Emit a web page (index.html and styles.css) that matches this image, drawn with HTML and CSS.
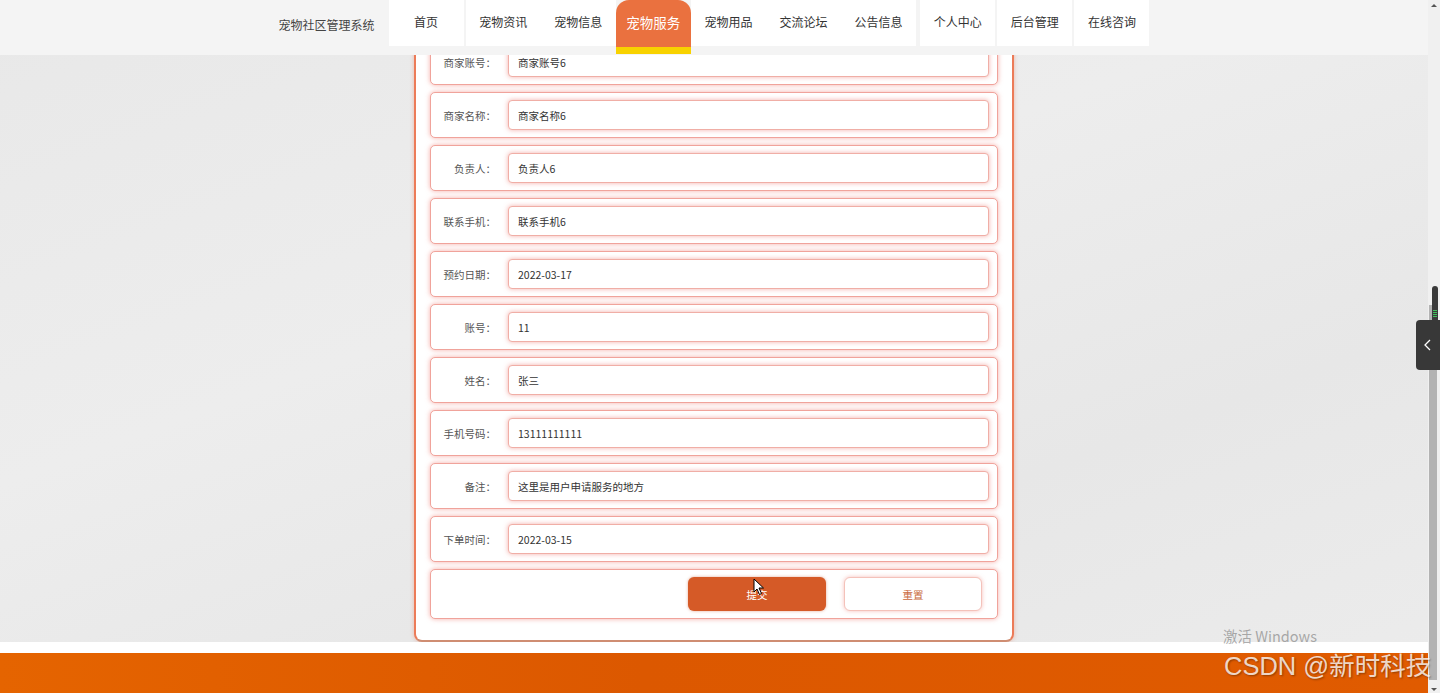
FILE: index.html
```html
<!DOCTYPE html>
<html lang="zh">
<head>
    <meta charset="UTF-8">
    <meta name="viewport" content="width=device-width, initial-scale=1.0">
    <title>宠物服务</title>
    <link rel="stylesheet" href="styles.css">
</head>
<body>

<div class="page">
    <header class="topbar">
        <div class="topbar-inner">
            <div class="brand">宠物社区管理系统</div>
            <nav class="nav">
                <a href="#" class="nav-item sep">首页</a>
                <a href="#" class="nav-item">宠物资讯</a>
                <a href="#" class="nav-item">宠物信息</a>
                <a href="#" class="nav-item active">宠物服务</a>
                <a href="#" class="nav-item">宠物用品</a>
                <a href="#" class="nav-item">交流论坛</a>
                <a href="#" class="nav-item sep-wide">公告信息</a>
                <a href="#" class="nav-item sep">个人中心</a>
                <a href="#" class="nav-item sep">后台管理</a>
                <a href="#" class="nav-item">在线咨询</a>
            </nav>
        </div>
    </header>

    <main class="content">
        <form class="card" onsubmit="return false">
            <div class="row"><label>商家账号：</label><input type="text" value="商家账号6"></div>
            <div class="row"><label>商家名称：</label><input type="text" value="商家名称6"></div>
            <div class="row"><label>负责人：</label><input type="text" value="负责人6"></div>
            <div class="row"><label>联系手机：</label><input type="text" value="联系手机6"></div>
            <div class="row"><label>预约日期：</label><input type="text" value="2022-03-17"></div>
            <div class="row"><label>账号：</label><input type="text" value="11"></div>
            <div class="row"><label>姓名：</label><input type="text" value="张三"></div>
            <div class="row"><label>手机号码：</label><input type="text" value="13111111111"></div>
            <div class="row"><label>备注：</label><input type="text" value="这里是用户申请服务的地方"></div>
            <div class="row"><label>下单时间：</label><input type="text" value="2022-03-15"></div>
            <div class="row actions">
                <button type="submit" class="btn btn-submit">提交</button>
                <button type="reset" class="btn btn-reset">重置</button>
            </div>
        </form>
    </main>

    <footer class="footer"></footer>

    <svg class="cursor" width="12" height="18" viewBox="0 0 12 18">
        <path d="M1 1 L1 14 L4 11 L6.5 16.5 L8.5 15.5 L6 10 L10.5 10 Z" fill="#fff" stroke="#000" stroke-width="1"/>
    </svg>

    <div class="watermark">激活 Windows</div>
    <div class="csdn">CSDN @新时科技</div>
</div>

<div class="scrollbar">
    <span class="arrow up"></span>
    <div class="thumb"></div>
    <span class="arrow down"></span>
</div>

<div class="side-pill"><i></i><i></i><i></i><i></i></div>
<div class="side-tab">
    <svg width="10" height="14" viewBox="0 0 10 14"><path d="M7 2 L2 7 L7 12" fill="none" stroke="#fff" stroke-width="1.3"/></svg>
</div>

</body>
</html>
```

FILE: styles.css
```css
html, body {
    margin: 0;
    height: 693px;
    overflow: hidden;
}
body {
    display: flex;
    font-family: "Noto Sans CJK SC", "Noto Sans", sans-serif;
    background: #ebebeb;
}
.page {
    flex: 1;
    position: relative;
    display: flex;
    flex-direction: column;
    background: linear-gradient(160deg, #e8e8e8, #ededed 40%, #e7e7e7 70%, #ececec);
}

/* header */
.topbar {
    position: absolute;
    top: 0;
    left: 0;
    right: 0;
    height: 55px;
    background: #f4f4f4;
    z-index: 5;
}
.topbar-inner {
    width: 871px;
    margin: 0 auto;
    display: flex;
}
.brand {
    width: 110px;
    font-size: 12px;
    color: #444;
    line-height: 50px;
}
.nav {
    width: 761px;
    display: flex;
    align-items: flex-start;
}
.nav-item {
    flex: 1;
    height: 46px;
    line-height: 44px;
    background: #fff;
    text-align: center;
    font-size: 12px;
    color: #333;
    text-decoration: none;
}
.nav-item.sep {
    margin-right: 2px;
}
.nav-item.sep-wide {
    margin-right: 4px;
}
.nav-item.active {
    height: 47px;
    background: #ea713f;
    color: #fff;
    font-size: 13.5px;
    border-radius: 13px 13px 0 0;
    border-bottom: 7px solid #f8d200;
}

/* form card */
.content {
    flex: 1;
}
.card {
    box-sizing: border-box;
    width: 600px;
    height: 642px;
    margin: 0 auto;
    padding: 37px 14px 21px;
    background: #fff;
    border: 2px solid #ec7b58;
    border-bottom-color: #cf8d72;
    border-radius: 0 0 8px 8px;
    box-shadow: 0 0 4px rgba(236, 120, 90, 0.45);
}
.row {
    box-sizing: border-box;
    height: 46px;
    margin-bottom: 7px;
    display: flex;
    align-items: center;
    background: #fff;
    border: 1px solid #f0a39b;
    border-radius: 5px;
    box-shadow: 0 0 5px rgba(240, 120, 110, 0.6);
}
.row label {
    width: 65px;
    text-align: right;
    font-size: 10.5px;
    color: #555;
}
.row input {
    box-sizing: border-box;
    width: 481px;
    height: 30px;
    margin-left: 12px;
    padding: 0 9px;
    border: 1px solid #f0aea6;
    border-radius: 4px;
    box-shadow: 0 0 5px rgba(235, 110, 100, 0.55);
    font-family: inherit;
    font-size: 10.5px;
    color: #333;
    outline: none;
}
.row.actions {
    height: 50px;
    margin-bottom: 0;
    justify-content: flex-end;
    gap: 18px;
    padding-right: 15px;
}
.btn {
    width: 138px;
    height: 34px;
    border-radius: 6px;
    font-family: inherit;
    font-size: 10.5px;
    cursor: pointer;
}
.btn-submit {
    background: #d55a27;
    color: #fff;
    border: none;
    box-shadow: 0 0 3px rgba(200, 80, 40, 0.5);
}
.btn-reset {
    background: #fff;
    color: #c96a3c;
    border: 1px solid #f4c2ba;
    box-shadow: 0 0 4px rgba(240, 130, 120, 0.5);
}

/* footer */
.footer {
    height: 40px;
    border-top: 11px solid #fff;
    background: linear-gradient(90deg, #e56400, #dc5800 45%, #e05b00);
}

/* overlays */
.cursor {
    position: absolute;
    left: 753px;
    top: 578px;
}
.watermark {
    position: absolute;
    left: 1223px;
    top: 625px;
    font-size: 14.5px;
    color: rgba(120, 120, 120, 0.6);
}
.csdn {
    position: absolute;
    left: 1224px;
    top: 645px;
    font-family: "Liberation Sans", "Noto Sans CJK SC", sans-serif;
    font-size: 25.5px;
    color: rgba(255, 255, 255, 0.78);
    text-shadow: 1px 1px 2px rgba(0, 0, 0, 0.35);
    white-space: nowrap;
}

/* fake browser scrollbar */
.scrollbar {
    width: 12px;
    background: #f0f0f0;
    display: flex;
    flex-direction: column;
    align-items: center;
}
.arrow {
    width: 0;
    height: 0;
    border-left: 3px solid transparent;
    border-right: 3px solid transparent;
}
.arrow.up {
    margin-top: 4px;
    border-bottom: 3px solid #555;
}
.arrow.down {
    margin-top: 8px;
    border-top: 3px solid #555;
}
.thumb {
    width: 8px;
    height: 375px;
    margin-top: 298px;
    margin-left: -2px;
    background: #b3b3b3;
}
.side-pill {
    position: fixed;
    right: 2px;
    top: 286px;
    width: 6px;
    height: 42px;
    border-radius: 3px;
    background: #3a3a3a;
    display: flex;
    flex-direction: column;
    align-items: center;
    gap: 1px;
    padding-top: 24px;
    box-sizing: border-box;
    z-index: 6;
}
.side-pill i {
    width: 4px;
    height: 1px;
    background: #3ec05a;
}
.side-tab {
    position: fixed;
    right: 0;
    top: 320px;
    width: 24px;
    height: 50px;
    background: #383838;
    border-radius: 4px 0 0 4px;
    display: flex;
    align-items: center;
    justify-content: center;
    z-index: 7;
}
```
